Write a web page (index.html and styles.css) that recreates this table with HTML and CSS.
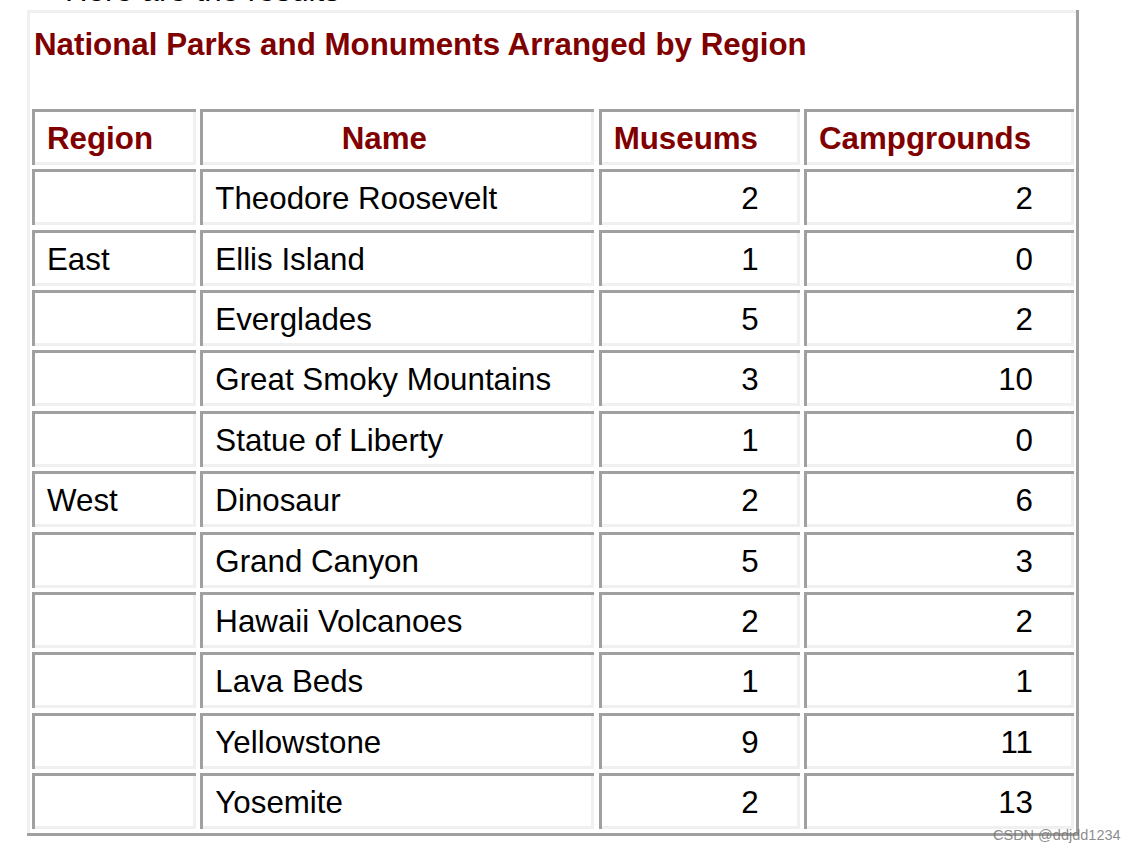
FILE: index.html
```html
<!DOCTYPE html>
<html>
<head>
<meta charset="utf-8">
<title>National Parks and Monuments Arranged by Region</title>
<link rel="stylesheet" href="styles.css">
</head>
<body>
<div class="page">
  <div class="heading">Here are the results</div>
  <div class="frame">
    <div class="caption">National Parks and Monuments Arranged by Region</div>
    <div class="grid">
      <div class="cell head">Region</div>
      <div class="cell head center">Name</div>
      <div class="cell head">Museums</div>
      <div class="cell head">Campgrounds</div>

      <div class="cell"></div><div class="cell">Theodore Roosevelt</div><div class="cell num">2</div><div class="cell num">2</div>
      <div class="cell">East</div><div class="cell">Ellis Island</div><div class="cell num">1</div><div class="cell num">0</div>
      <div class="cell"></div><div class="cell">Everglades</div><div class="cell num">5</div><div class="cell num">2</div>
      <div class="cell"></div><div class="cell">Great Smoky Mountains</div><div class="cell num">3</div><div class="cell num">10</div>
      <div class="cell"></div><div class="cell">Statue of Liberty</div><div class="cell num">1</div><div class="cell num">0</div>
      <div class="cell">West</div><div class="cell">Dinosaur</div><div class="cell num">2</div><div class="cell num">6</div>
      <div class="cell"></div><div class="cell">Grand Canyon</div><div class="cell num">5</div><div class="cell num">3</div>
      <div class="cell"></div><div class="cell">Hawaii Volcanoes</div><div class="cell num">2</div><div class="cell num">2</div>
      <div class="cell"></div><div class="cell">Lava Beds</div><div class="cell num">1</div><div class="cell num">1</div>
      <div class="cell"></div><div class="cell">Yellowstone</div><div class="cell num">9</div><div class="cell num">11</div>
      <div class="cell"></div><div class="cell">Yosemite</div><div class="cell num">2</div><div class="cell num">13</div>
    </div>
  </div>
  <div class="watermark">CSDN @ddjdd1234</div>
</div>
</body>
</html>
```

FILE: styles.css
```css
html, body {
  margin: 0;
  padding: 0;
  background: #ffffff;
}

body {
  font-family: "Liberation Sans", Arial, sans-serif;
  font-size: 31.3px;
  line-height: 36px;
  color: #000000;
  overflow: hidden;
}

.page {
  position: relative;
  width: 1134px;
  height: 854px;
  overflow: hidden;
}

.heading {
  margin: -27.5px 0 1.5px 65px;
  height: 36px;
  white-space: nowrap;
}

.frame {
  margin-left: 27px;
  width: 1052px;
  box-sizing: border-box;
  padding: 3px 5px 7px 5px;
  box-shadow: inset -3px -3px 0 #a0a0a0, inset 3px 3px 0 #f0f0f0;
}

.caption {
  padding: 14px 0 46px 2px;
  height: 36px;
  font-weight: bold;
  color: #800000;
  white-space: nowrap;
}

.grid {
  display: grid;
  grid-template-columns: 164px 394px 201px 270px;
  grid-auto-rows: 56px;
  column-gap: 4.33px;
  row-gap: 4.36px;
}

.cell {
  box-sizing: border-box;
  display: flex;
  align-items: center;
  padding: 4px 41px 0 15px;
  box-shadow: inset 3px 3px 0 #a0a0a0, inset -3px -3px 0 #f0f0f0;
  white-space: nowrap;
}

.head {
  font-weight: bold;
  color: #800000;
}

.center {
  justify-content: center;
}

.num {
  justify-content: flex-end;
}

.watermark {
  position: absolute;
  left: 993px;
  top: 827px;
  font-size: 14.5px;
  line-height: 17px;
  color: rgba(110, 110, 110, 0.8);
  white-space: nowrap;
}
```
